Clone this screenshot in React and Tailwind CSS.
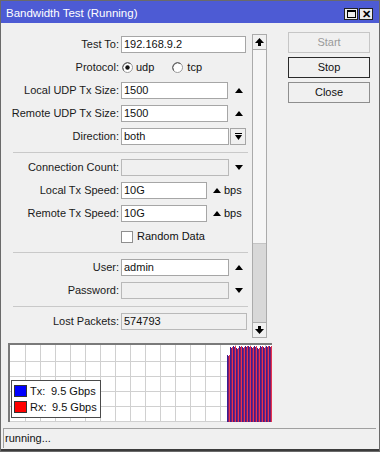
import React from "react";

const TriUp = () => (
  <svg width="8" height="5" viewBox="0 0 8 5">
    <polygon points="0,5 8,5 4,0" fill="#000" />
  </svg>
);

const TriDown = () => (
  <svg width="8" height="5" viewBox="0 0 8 5">
    <polygon points="0,0 8,0 4,5" fill="#000" />
  </svg>
);

const ScrollArrow = ({ down }) => (
  <svg width="9" height="8" viewBox="0 0 9 8">
    {down ? (
      <>
        <rect x="3" y="0" width="3" height="3" fill="#000" />
        <polygon points="0,3 9,3 4.5,8" fill="#000" />
      </>
    ) : (
      <>
        <polygon points="0,5 9,5 4.5,0" fill="#000" />
        <rect x="3" y="5" width="3" height="3" fill="#000" />
      </>
    )}
  </svg>
);

const Radio = ({ checked }) => (
  <svg width="11" height="11" viewBox="0 0 11 11">
    <circle cx="5.5" cy="5.5" r="5" fill="#fff" stroke="#9a9a9a" />
    <path d="M1.6 8.5 A5 5 0 0 1 8.5 1.6" fill="none" stroke="#555" />
    {checked && <circle cx="5.5" cy="5.5" r="2.2" fill="#111" />}
  </svg>
);

const Input = ({ w, value, disabled }) => (
  <div
    className={`h-[17px] ${w} border ${
      disabled ? "border-[#b9b9b9] bg-[#f0f0f0]" : "border-[#a6a6a6] bg-white"
    } pl-[2px] leading-[15px] text-[#111]`}
  >
    {value}
  </div>
);

const Row = ({ label, children }) => (
  <div className="flex h-[23px] items-center">
    <div className="w-[118px] text-right text-[#1a1a1a]">{label}</div>
    <div className="ml-[2px] flex items-center">{children}</div>
  </div>
);

const Sep = () => (
  <div className="flex h-[8px] items-center pl-[12px] pr-[4px]">
    <div className="h-px w-full bg-[#c9c9c9]" />
  </div>
);

const Side = ({ children }) => (
  <div className="flex w-[17px] justify-end pr-[3px]">{children}</div>
);

const Graph = () => {
  const vLines = Array.from({ length: 17 }, (_, i) => 15 * (i + 1) + 0.5);
  const hLines = [16.5, 31.5, 46.5, 61.5, 76.5];
  const tops = [10, 2, 1, 3, 1, 2, 1, 1, 2, 1, 3, 1, 2, 1, 1];
  return (
    <svg width="262" height="77" viewBox="0 0 262 77" className="block">
      {vLines.map((x) => (
        <line key={"v" + x} x1={x} y1="0" x2={x} y2="77" stroke="#d0d0d0" />
      ))}
      {hLines.map((y) => (
        <line key={"h" + y} x1="0" y1={y} x2="262" y2={y} stroke="#d0d0d0" />
      ))}
      {tops.map((t, k) => {
        const x0 = 217 + 3 * k;
        return (
          <g key={k}>
            <rect x={x0} y={t} width="1" height={77 - t} fill="#3a1f96" />
            <rect x={x0 + 1} y={t + 1} width="1" height={76 - t} fill="#7c1e6a" />
            <rect x={x0 + 2} y={t} width="1" height={77 - t} fill="#e8344f" />
          </g>
        );
      })}
    </svg>
  );
};

export default function App() {
  return (
    <div className="flex h-[452px] w-[380px] flex-col border border-[#6a6a6a] bg-[#f0f0f0] font-['Liberation_Sans',Arial,sans-serif] text-[11px] text-[#111]">
      {/* title bar */}
      <div className="flex h-[22px] shrink-0 items-center bg-[#4d5bd4] pl-[5px] pr-[6px]">
        <span className="pt-[3px] text-[11.5px] text-white">Bandwidth Test (Running)</span>
        <div className="ml-auto flex gap-[1px] pt-[4px]">
          <div className="flex h-[12px] w-[14px] items-center justify-center border border-[#222] bg-[#ececec]">
            <div className="h-[8px] w-[9px] border border-t-2 border-[#000]" />
          </div>
          <div className="flex h-[12px] w-[14px] items-center justify-center border border-[#222] bg-[#ececec] text-[11px] leading-none font-bold text-black">
            ✕
          </div>
        </div>
      </div>

      {/* main */}
      <div className="flex shrink-0 pt-[9px]">
        <div className="w-[251px] pt-[1px]">
          <Row label="Test To:">
            <Input w="w-[125px]" value="192.168.9.2" />
          </Row>
          <Row label="Protocol:">
            <div className="flex items-center pl-[1px]">
              <Radio checked />
              <span className="ml-[3px]">udp</span>
              <span className="ml-[18px]">
                <Radio />
              </span>
              <span className="ml-[4px]">tcp</span>
            </div>
          </Row>
          <Row label="Local UDP Tx Size:">
            <Input w="w-[107px]" value="1500" />
            <div className="flex w-[18px] justify-end pr-[3px]">
              <TriUp />
            </div>
          </Row>
          <Row label="Remote UDP Tx Size:">
            <Input w="w-[107px]" value="1500" />
            <div className="flex w-[18px] justify-end pr-[3px]">
              <TriUp />
            </div>
          </Row>
          <Row label="Direction:">
            <Input w="w-[108px]" value="both" />
            <div className="ml-[1px] flex h-[17px] w-[16px] flex-col items-center justify-center border border-[#a6a6a6] bg-[#f0f0f0]">
              <div className="h-px w-[7px] bg-black" />
              <div className="mt-[1px]">
                <svg width="7" height="5" viewBox="0 0 7 5">
                  <polygon points="0,0 7,0 3.5,5" fill="#000" />
                </svg>
              </div>
            </div>
          </Row>
          <Sep />
          <Row label="Connection Count:">
            <Input w="w-[108px]" value="" disabled />
            <Side>
              <TriDown />
            </Side>
          </Row>
          <Row label="Local Tx Speed:">
            <Input w="w-[86px]" value="10G" />
            <div className="ml-[6px]">
              <TriUp />
            </div>
            <span className="ml-[3px]">bps</span>
          </Row>
          <Row label="Remote Tx Speed:">
            <Input w="w-[86px]" value="10G" />
            <div className="ml-[6px]">
              <TriUp />
            </div>
            <span className="ml-[3px]">bps</span>
          </Row>
          <Row label="">
            <div className="h-[12px] w-[12px] border border-[#8f8f8f] bg-white" />
            <span className="ml-[4px]">Random Data</span>
          </Row>
          <Sep />
          <Row label="User:">
            <Input w="w-[108px]" value="admin" />
            <Side>
              <TriUp />
            </Side>
          </Row>
          <Row label="Password:">
            <Input w="w-[108px]" value="" disabled />
            <Side>
              <TriDown />
            </Side>
          </Row>
          <Sep />
          <Row label="Lost Packets:">
            <Input w="w-[126px]" value="574793" disabled />
          </Row>
        </div>

        {/* scrollbar */}
        <div className="mt-[2px] flex h-[304px] w-[15px] flex-col border border-[#ababab] bg-[#f6f6f6]">
          <div className="flex h-[15px] items-center justify-center border-b border-[#ababab] bg-[#f0f0f0]">
            <ScrollArrow />
          </div>
          <div className="flex-1" />
          <div className="h-[79px] border-t border-[#c4c4c4] bg-[#d8d8d8]" />
          <div className="flex h-[15px] items-center justify-center border-t border-[#ababab] bg-[#f0f0f0]">
            <ScrollArrow down />
          </div>
        </div>

        {/* buttons */}
        <div className="ml-[21px] flex w-[82px] flex-col gap-[4px]">
          <div className="flex h-[21px] items-center justify-center border border-[#c6c6c6] bg-[#f0f0f0] text-[#9a9a9a]">
            Start
          </div>
          <div className="flex h-[21px] items-center justify-center border border-[#2a2a2a] bg-[#f0f0f0]">
            Stop
          </div>
          <div className="flex h-[21px] items-center justify-center border border-[#8e8e8e] bg-[#f0f0f0]">
            Close
          </div>
        </div>
      </div>

      {/* graph */}
      <div className="relative ml-[7px] mt-[5px] h-[79px] w-[264px] shrink-0 border-l-2 border-t-2 border-[#7a7a7a] bg-white">
        <Graph />
        <div className="absolute left-[1px] top-[35px] flex w-[90px] flex-col gap-[4px] border border-[#4a4a4a] bg-white px-[2px] py-[4px]">
          <div className="flex h-[12px] items-center">
            <div className="h-[12px] w-[13px] border border-[#333] bg-[#0000ff]" />
            <span className="ml-[3px] w-[21px]">Tx:</span>
            <span>9.5 Gbps</span>
          </div>
          <div className="flex h-[12px] items-center">
            <div className="h-[12px] w-[13px] border border-[#333] bg-[#ff0000]" />
            <span className="ml-[3px] w-[22px]">Rx:</span>
            <span>9.5 Gbps</span>
          </div>
        </div>
      </div>

      {/* status bar */}
      <div className="ml-[2px] mr-[3px] mt-[6px] flex h-[20px] shrink-0 items-center border-l border-t border-[#a0a0a0] pl-[1px]">
        running...
      </div>
      <div className="flex-1 border-b-2 border-[#3c3c3c]" />
    </div>
  );
}
